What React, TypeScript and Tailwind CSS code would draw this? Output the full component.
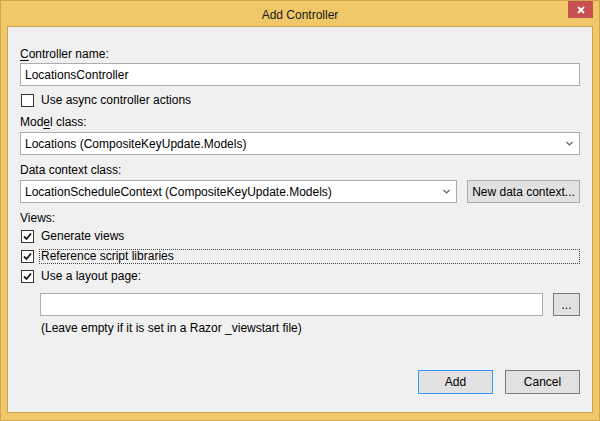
import React from 'react';

const Check: React.FC<{ checked?: boolean }> = ({ checked }) => (
  <span className="w-[13px] h-[13px] border border-[#333333] bg-white flex items-center justify-center flex-shrink-0">
    {checked && (
      <svg width="9" height="9" viewBox="0 0 9 9">
        <path d="M1 4.5 L3.5 7 L8 1.5" fill="none" stroke="#1a1a1a" strokeWidth="1.8" />
      </svg>
    )}
  </span>
);

const Chevron: React.FC = () => (
  <svg width="7" height="5" viewBox="0 0 7 5" className="flex-shrink-0">
    <path d="M0.5 1 L3.5 4 L6.5 1" fill="none" stroke="#606060" strokeWidth="1.2" />
  </svg>
);

const App: React.FC = () => {
  return (
    <div
      className="w-[600px] h-[421px] bg-[#f0c869] border border-[#cfa750] flex flex-col text-[12px] leading-[16px] text-black"
      style={{ fontFamily: '"Liberation Sans", Arial, sans-serif' }}
    >
      {/* title bar */}
      <div className="h-[25px] flex-shrink-0 relative flex items-start justify-center pt-[6px]">
        <span className="text-[#1b1b1b]">Add Controller</span>
        <div className="absolute right-[6px] top-0 w-[25px] h-[17px] bg-[#c75050] flex items-center justify-center">
          <svg width="8" height="8" viewBox="0 0 8 8">
            <path d="M1 1 L7 7 M7 1 L1 7" stroke="white" strokeWidth="1.8" />
          </svg>
        </div>
      </div>

      {/* content */}
      <div className="flex-1 mx-[6px] mb-[7px] border border-[#c9a24d] bg-[#f0f0f0] flex flex-col pl-[12px] pr-[12px]">
        <div className="mt-[19px] h-[16px]">
          <span className="underline underline-offset-2">C</span>ontroller name:
        </div>
        <div className="mt-[1px] h-[23px] border border-[#abadb3] bg-white flex items-center pl-[4px]">
          LocationsController
        </div>

        <div className="mt-[6px] h-[16px] flex items-center gap-[7px] pl-[1px]">
          <Check />
          <span>Use async controller actions</span>
        </div>

        <div className="mt-[6px] h-[16px]">
          Mod<span className="underline underline-offset-2">e</span>l class:
        </div>
        <div className="mt-[2px] h-[23px] border border-[#acacac] bg-white flex items-center pl-[4px] pr-[6px] justify-between">
          <span>Locations (CompositeKeyUpdate.Models)</span>
          <Chevron />
        </div>

        <div className="mt-[7px] h-[16px]">Data context class:</div>
        <div className="mt-[2px] h-[23px] flex gap-[10px]">
          <div className="w-[437px] border border-[#acacac] bg-white flex items-center pl-[4px] pr-[6px] justify-between">
            <span>LocationScheduleContext (CompositeKeyUpdate.Models)</span>
            <Chevron />
          </div>
          <div className="flex-1 border border-[#adadad] bg-[#e1e1e1] flex items-center justify-center">
            New data context...
          </div>
        </div>

        <div className="mt-[7px] h-[16px]">Views:</div>
        <div className="mt-[2px] h-[16px] flex items-center gap-[7px] pl-[1px]">
          <Check checked />
          <span>Generate views</span>
        </div>
        <div className="mt-[4px] h-[16px] flex items-center gap-[5px] pl-[1px]">
          <Check checked />
          <span className="flex-1 h-[15px] border border-dotted border-[#444] pl-[1px] leading-[13px]">
            Reference script libraries
          </span>
        </div>
        <div className="mt-[4px] h-[16px] flex items-center gap-[7px] pl-[1px]">
          <Check checked />
          <span>Use a layout page:</span>
        </div>

        <div className="mt-[9px] h-[23px] flex gap-[10px] pl-[20px]">
          <div className="flex-1 border border-[#abadb3] bg-white" />
          <div className="w-[27px] border border-[#7a7a7a] bg-[#e1e1e1] flex items-center justify-center">
            ...
          </div>
        </div>
        <div className="mt-[4px] h-[16px] pl-[21px]">
          (Leave empty if it is set in a Razor _viewstart file)
        </div>

        <div className="mt-auto mb-[18px] flex justify-end gap-[12px]">
          <div className="w-[75px] h-[24px] border border-[#3399ff] bg-[#e1e1e1] flex items-center justify-center">
            Add
          </div>
          <div className="w-[75px] h-[24px] border border-[#7a7a7a] bg-[#e1e1e1] flex items-center justify-center">
            Cancel
          </div>
        </div>
      </div>
    </div>
  );
};

export default App;
